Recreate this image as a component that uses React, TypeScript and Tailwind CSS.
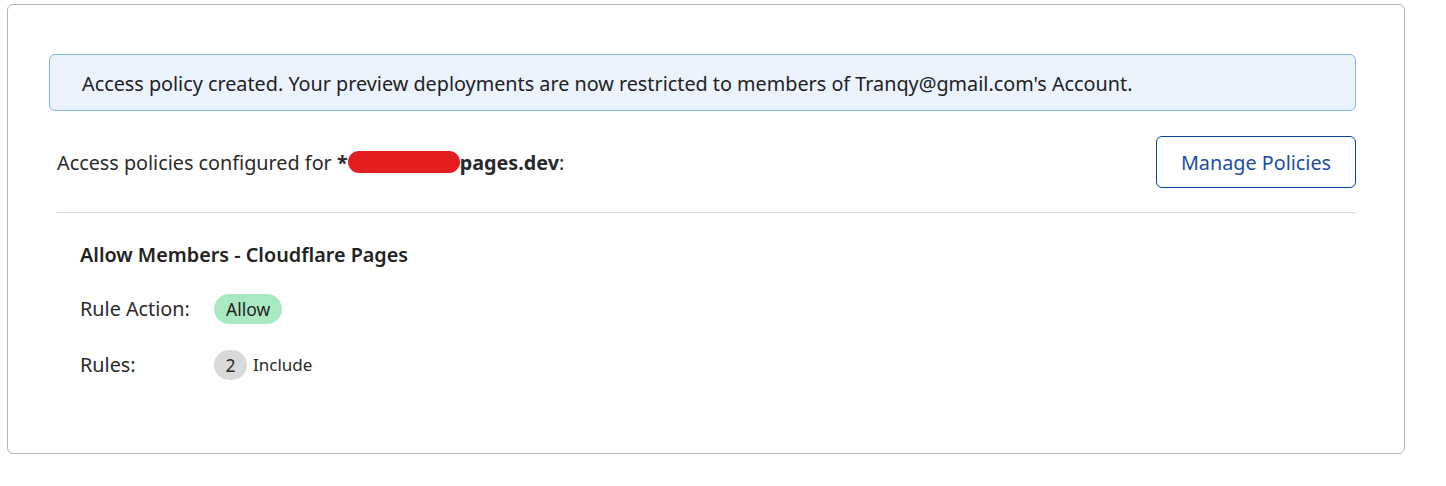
const Redacted = () => (
  <span className="inline-block h-[22px] w-[112px] translate-y-[3px] rounded-full bg-[#e41e1e] align-baseline" />
);

export default function App() {
  return (
    <div className="min-h-[486px] bg-white pl-[7px] pt-[4px] text-[#2a2a2a] [font-family:'Noto_Sans',sans-serif]">
      <div className="h-[450px] w-[1398px] rounded-md border border-[#b5b5b5] pl-[41px] pr-[48px] pt-[49px]">
        <div className="flex h-[57px] items-center rounded-md border border-[#82b4f2] bg-[#ebf3fe] px-8 pt-[3px] text-[19.8px] text-[#222]">
          Access policy created. Your preview deployments are now restricted to members of Tranqy@gmail.com's Account.
        </div>

        <div className="pl-2">
          <div className="mt-[25px] flex items-center justify-between">
            <p className="pt-[1px] text-[19.8px]">
              Access policies configured for <span className="font-bold">*</span>
              <Redacted />
              <span className="font-bold">pages.dev</span>:
            </p>
            <button className="h-[52px] w-[200px] rounded-md border border-[#0b45a0] pt-[2px] text-[19.8px] text-[#1b4ea3]">
              Manage Policies
            </button>
          </div>

          <div className="mt-[24px] border-t border-[#dcdcdc]" />

          <div className="pl-[23px] pt-[28px]">
            <h3 className="text-[19.8px] font-semibold leading-[28px] text-[#222]">Allow Members - Cloudflare Pages</h3>

            <div className="mt-[25px] flex items-center">
              <span className="w-[134px] text-[19.8px]">Rule Action:</span>
              <span className="flex h-[30px] items-center rounded-full bg-[#a9e9c2] px-[12px] text-[17.5px] text-[#1e1e1e]">
                Allow
              </span>
            </div>

            <div className="mt-[26px] flex items-center">
              <span className="w-[134px] text-[19.8px]">Rules:</span>
              <span className="flex h-[30px] w-[33px] items-center justify-center rounded-full bg-[#d9d9d9] text-[17.5px]">
                2
              </span>
              <span className="ml-[6px] text-[17px]">Include</span>
            </div>
          </div>
        </div>
      </div>
    </div>
  );
}
